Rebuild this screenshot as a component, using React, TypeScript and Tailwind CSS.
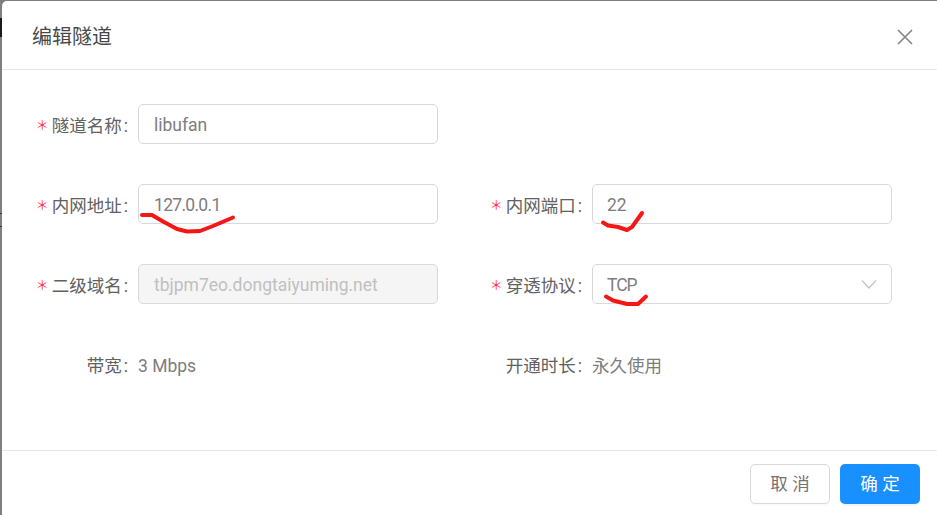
function Label({ text, required = true }: { text: string; required?: boolean }) {
  return (
    <div className="w-[102px] h-[40px] pt-[4px] shrink-0 flex items-center justify-end whitespace-nowrap text-[17.5px] text-[#616161]">
      {required && <span className="mr-[3px] w-[13px] shrink-0 text-[13px] text-[#ff3344]">＊</span>}
      <span className="shrink-0">{text}</span>
      <span className="ml-[2px] mr-[10px] shrink-0">:</span>
    </div>
  );
}

function Field({ value, disabled = false, select = false, textClass = "" }: { value: string; disabled?: boolean; select?: boolean; textClass?: string }) {
  return (
    <div
      className={
        "relative w-[300px] h-[40px] pt-[3px] shrink-0 flex items-center px-[15px] rounded-[5px] border border-[#d9d9d9] text-[17.5px] " +
        (disabled ? "bg-[#f5f5f5] text-[#c0c0c0]" : "bg-white text-[#7d7d7d]")
      }
    >
      <span className={textClass}>{value}</span>
      {select && (
        <svg className="absolute right-[14px] top-[13px]" width="16" height="12" viewBox="0 0 16 12" fill="none">
          <path d="M1 2.5 L8 10 L15 2.5" stroke="#c4c4c4" strokeWidth="1.2" />
        </svg>
      )}
    </div>
  );
}

function Cell({ label, children, right = false, required = true }: { label: string; children: React.ReactNode; right?: boolean; required?: boolean }) {
  return (
    <div className={"flex items-center " + (right ? "ml-[52px]" : "")}>
      <Label text={label} required={required} />
      {children}
    </div>
  );
}

export default function App() {
  return (
    <div className="relative w-[937px] h-[515px] overflow-hidden bg-[#7f7f7f] pl-[2px] pt-px [font-family:Roboto,'Noto_Sans_CJK_SC',sans-serif]">
      <div className="absolute left-0 top-[18px] w-[2px] h-[19px] bg-[#1a1a1a]" />
      <div className="absolute left-0 top-[213px] w-[2px] h-px bg-[#333333]" />
      <div className="absolute left-0 top-[226px] w-[2px] h-px bg-[#333333]" />

      <div className="flex flex-col h-[514px] bg-white rounded-tl-[5px]">
        <header className="h-[69px] shrink-0 flex items-center justify-between border-b border-[#e8e8e8] pt-[3px] pl-[30px] pr-[24px]">
          <h1 className="text-[20px] leading-[28px] font-normal text-[#484848]">编辑隧道</h1>
          <svg width="16" height="16" viewBox="0 0 16 16" fill="none">
            <path d="M1 1 L15 15 M15 1 L1 15" stroke="#858585" strokeWidth="1.6" />
          </svg>
        </header>

        <main className="flex-1 flex flex-col gap-[40px] pt-[34px] pl-[34px]">
          <div className="flex">
            <Cell label="隧道名称"><Field value="libufan" /></Cell>
          </div>
          <div className="flex">
            <Cell label="内网地址"><Field value="127.0.0.1" textClass="tracking-[-0.7px]" /></Cell>
            <Cell label="内网端口" right><Field value="22" textClass="-ml-px" /></Cell>
          </div>
          <div className="flex">
            <Cell label="二级域名"><Field value="tbjpm7eo.dongtaiyuming.net" disabled /></Cell>
            <Cell label="穿透协议" right><Field value="TCP" select textClass="-ml-px tracking-[-1px]" /></Cell>
          </div>
          <div className="flex">
            <Cell label="带宽" required={false}>
              <div className="w-[300px] h-[40px] pt-[4px] flex items-center text-[17.5px] text-[#7d7d7d]">3 Mbps</div>
            </Cell>
            <Cell label="开通时长" right required={false}>
              <div className="w-[300px] h-[40px] pt-[4px] flex items-center text-[17.5px] text-[#7d7d7d]">永久使用</div>
            </Cell>
          </div>
        </main>

        <footer className="h-[65px] shrink-0 flex justify-end gap-[10px] border-t border-[#e8e8e8] pt-[13px] pr-[17px]">
          <button className="w-[80px] h-[40px] rounded-[5px] border border-[#d9d9d9] bg-white text-[17.5px] text-[#737373] shadow-[0_2px_0_rgba(0,0,0,0.015)]">取 消</button>
          <button className="w-[80px] h-[40px] rounded-[5px] bg-[#1890ff] text-[17.5px] text-white shadow-[0_2px_0_rgba(0,0,0,0.045)]">确 定</button>
        </footer>
      </div>

      <svg className="absolute left-0 top-0 pointer-events-none" width="937" height="515" fill="none">
        <g stroke="#f51616" strokeWidth="4" strokeLinecap="round" strokeLinejoin="round">
          <path d="M142 215 L152 215 L163 221.5 L177 229 L187 231.5 L200 231 L213 226 L233 217.5" />
          <path d="M603 222.5 L608 225.5 L618 227 L627 230 L632 227 L642 213" />
          <path d="M606 296.5 L613 300.5 L627 304 L638 304 L646 296.5" />
        </g>
      </svg>
    </div>
  );
}
